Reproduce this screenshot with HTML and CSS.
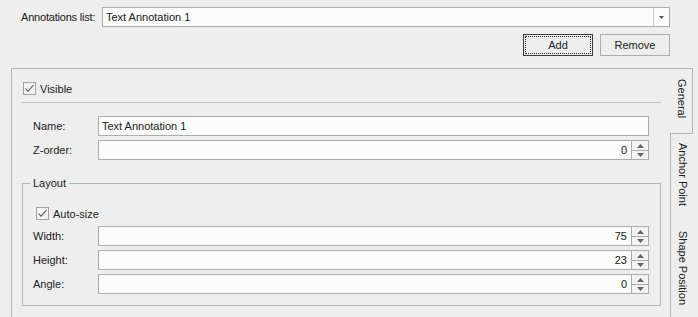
FILE: index.html
```html
<!DOCTYPE html>
<html>
<head>
<meta charset="utf-8">
<link rel="stylesheet" href="styles.css">
</head>
<body>
<div class="top">
  <div class="row-combo">
    <span class="lbl-ann">Annotations list:</span>
    <div class="combo">
      <span class="combo-text">Text Annotation 1</span>
      <span class="combo-btn"><svg width="5" height="3" viewBox="0 0 5 3"><polygon points="0,0 5,0 2.5,3" fill="#555"/></svg></span>
    </div>
  </div>
  <div class="row-btns">
    <div class="btn btn-default"><div class="btn-focus">Add</div></div>
    <div class="btn"><div class="btn-inner">Remove</div></div>
  </div>
</div>
<div class="panel">
  <div class="content">
    <div class="check-row visible-row">
      <span class="cb"><svg width="13" height="13" viewBox="0 0 13 13"><rect x="0.5" y="0.5" width="12" height="12" fill="#f3f3f3" stroke="#a2a2a2"/><polyline points="2.5,6.5 5,9.2 10.5,3.2" fill="none" stroke="#5a5a5a" stroke-width="1.1"/></svg></span>
      <span>Visible</span>
    </div>
    <div class="sep"></div>
    <div class="fields">
      <div class="field">
        <span class="flabel">Name:</span>
        <div class="input"><span class="val">Text Annotation 1</span></div>
      </div>
      <div class="field">
        <span class="flabel">Z-order:</span>
        <div class="input">
          <span class="val num">0</span>
          <span class="spin">
            <span class="sp sp-up"><svg width="7" height="4" viewBox="0 0 7 4"><polygon points="0,4 7,4 3.5,0" fill="#646464"/></svg></span>
            <span class="sp sp-down"><svg width="7" height="4" viewBox="0 0 7 4"><polygon points="0,0 7,0 3.5,4" fill="#646464"/></svg></span>
          </span>
        </div>
      </div>
    </div>
    <div class="group">
      <span class="legend">Layout</span>
      <div class="check-row auto-row">
        <span class="cb"><svg width="13" height="13" viewBox="0 0 13 13"><rect x="0.5" y="0.5" width="12" height="12" fill="#f3f3f3" stroke="#a2a2a2"/><polyline points="2.5,6.5 5,9.2 10.5,3.2" fill="none" stroke="#5a5a5a" stroke-width="1.1"/></svg></span>
        <span>Auto-size</span>
      </div>
      <div class="gfields">
        <div class="field">
          <span class="flabel">Width:</span>
          <div class="input">
            <span class="val num">75</span>
            <span class="spin">
              <span class="sp sp-up"><svg width="7" height="4" viewBox="0 0 7 4"><polygon points="0,4 7,4 3.5,0" fill="#646464"/></svg></span>
              <span class="sp sp-down"><svg width="7" height="4" viewBox="0 0 7 4"><polygon points="0,0 7,0 3.5,4" fill="#646464"/></svg></span>
            </span>
          </div>
        </div>
        <div class="field">
          <span class="flabel">Height:</span>
          <div class="input">
            <span class="val num">23</span>
            <span class="spin">
              <span class="sp sp-up"><svg width="7" height="4" viewBox="0 0 7 4"><polygon points="0,4 7,4 3.5,0" fill="#646464"/></svg></span>
              <span class="sp sp-down"><svg width="7" height="4" viewBox="0 0 7 4"><polygon points="0,0 7,0 3.5,4" fill="#646464"/></svg></span>
            </span>
          </div>
        </div>
        <div class="field">
          <span class="flabel">Angle:</span>
          <div class="input">
            <span class="val num">0</span>
            <span class="spin">
              <span class="sp sp-up"><svg width="7" height="4" viewBox="0 0 7 4"><polygon points="0,4 7,4 3.5,0" fill="#646464"/></svg></span>
              <span class="sp sp-down"><svg width="7" height="4" viewBox="0 0 7 4"><polygon points="0,0 7,0 3.5,4" fill="#646464"/></svg></span>
            </span>
          </div>
        </div>
      </div>
    </div>
  </div>
  <div class="tabs">
    <div class="tab-active"><span class="tab-label">General</span></div>
    <div class="tab-rest">
      <div class="tab-item"><span class="tab-label">Anchor Point</span></div>
      <div class="tab-item"><span class="tab-label">Shape Position</span></div>
    </div>
  </div>
</div>
</body>
</html>
```
FILE: styles.css
```css
html, body {
  margin: 0;
  padding: 0;
}
body {
  background: #eeeeee;
  font-family: "Liberation Sans", Arial, sans-serif;
  font-size: 11px;
  color: #202020;
  width: 698px;
  height: 317px;
  overflow: hidden;
}
.top {
  padding: 7px 28px 0 21px;
}
.row-combo {
  display: flex;
  align-items: center;
  height: 20px;
}
.lbl-ann {
  width: 81px;
  flex: none;
  letter-spacing: -0.2px;
}
.combo {
  flex: 1;
  height: 20px;
  box-sizing: border-box;
  border: 1px solid #acacac;
  background: #fcfcfc;
  display: flex;
}
.combo-text {
  flex: 1;
  padding-left: 3px;
  line-height: 18px;
}
.combo-btn {
  width: 15px;
  border-left: 1px solid #c8c8c8;
  display: flex;
  align-items: center;
  justify-content: center;
}
.row-btns {
  display: flex;
  justify-content: flex-end;
  gap: 7px;
  margin-top: 7px;
}
.btn {
  width: 70px;
  height: 22px;
  box-sizing: border-box;
  border: 1px solid #adadad;
  background: #eeeeee;
  display: flex;
}
.btn-default {
  border-color: #3c3c3c;
}
.btn-focus, .btn-inner {
  flex: 1;
  margin: 1px;
  display: flex;
  align-items: center;
  justify-content: center;
}
.btn-focus {
  border: 1px dotted #222;
}
.btn-inner {
  border: 1px solid transparent;
}
.panel {
  display: flex;
  margin: 12px 0 0 11px;
  width: 682px;
  height: 262px;
}
.content {
  width: 659px;
  flex: none;
  box-sizing: border-box;
  border-left: 1px solid #b4b4b4;
  border-top: 1px solid #b4b4b4;
}
.check-row {
  display: flex;
  align-items: center;
  gap: 4px;
  height: 13px;
}
.cb {
  display: flex;
  width: 13px;
  height: 13px;
}
.visible-row {
  margin: 13px 0 0 11px;
}
.sep {
  margin: 7px 9px 0 10px;
  border-top: 1px solid #c2c2c2;
}
.fields {
  margin-top: 13px;
  padding-left: 21px;
}
.field {
  display: flex;
  align-items: center;
  height: 20px;
}
.field + .field {
  margin-top: 4px;
}
.flabel {
  width: 65px;
  flex: none;
}
.input {
  width: 551px;
  height: 20px;
  box-sizing: border-box;
  border: 1px solid #acacac;
  background: #fcfcfc;
  display: flex;
}
.val {
  flex: 1;
  padding: 0 3px;
  line-height: 18px;
}
.num {
  text-align: right;
  padding-right: 4px;
}
.spin {
  width: 16px;
  border-left: 1px solid #acacac;
  display: flex;
  flex-direction: column;
  background: #f2f2f2;
}
.sp {
  display: flex;
  align-items: center;
  justify-content: center;
}
.sp-up {
  height: 9px;
  border-bottom: 1px solid #acacac;
}
.sp-down {
  flex: 1;
}
.group {
  position: relative;
  margin: 23px 9px 0 10px;
  border: 1px solid #b4b4b4;
  padding: 0 11px 11px 10px;
}
.legend {
  position: absolute;
  left: 7px;
  top: -7px;
  padding: 0 3px;
  line-height: 13px;
  background: #eeeeee;
}
.auto-row {
  margin-top: 23px;
  padding-left: 3px;
}
.gfields {
  margin-top: 6px;
}
.tabs {
  width: 23px;
  flex: none;
  display: flex;
  flex-direction: column;
}
.tab-active {
  height: 66px;
  box-sizing: border-box;
  border-top: 1px solid #b4b4b4;
  border-right: 1px solid #b4b4b4;
  border-bottom: 1px solid #b4b4b4;
  padding-top: 10px;
  padding-left: 1px;
  display: flex;
  flex-direction: column;
  align-items: center;
}
.tab-rest {
  flex: 1;
  border-left: 1px solid #b4b4b4;
  padding-top: 9px;
  display: flex;
  flex-direction: column;
}
.tab-item {
  height: 88px;
  display: flex;
  flex-direction: column;
  align-items: center;
}
.tab-label {
  writing-mode: vertical-rl;
  line-height: 13px;
}
```
